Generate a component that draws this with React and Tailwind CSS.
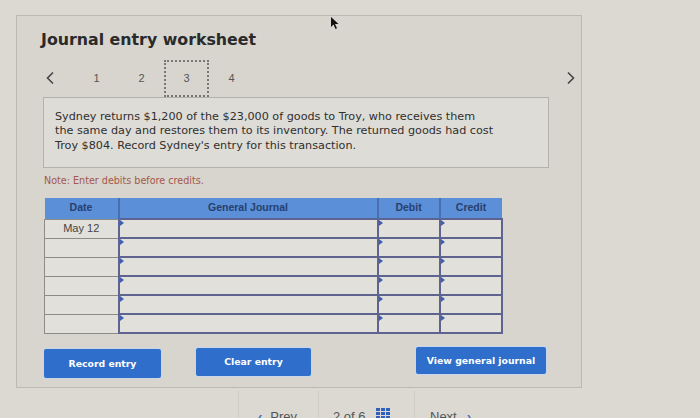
import React from "react";

const rows = ["May 12", "", "", "", "", ""];

const Marker = () => (
  <span className="absolute left-0 top-0 h-0 w-0 border-y-[3px] border-l-[4px] border-y-transparent border-l-[#3f5fb5]" />
);

const Tab = ({ label, active }) => (
  <div
    className={
      "flex h-[37px] w-[45px] items-center justify-center text-[11px] text-[#555]" +
      (active ? " border-2 border-dotted border-[#777]" : "")
    }
  >
    {label}
  </div>
);

const Button = ({ label, className }) => (
  <button
    className={
      "flex items-center justify-center rounded-[2px] bg-[#2f6ecb] text-[9.3px] font-bold text-white shadow-[0_0_0_1px_#c7d6ec] " +
      className
    }
    style={{ fontFamily: "'DejaVu Sans', Verdana, sans-serif" }}
  >
    {label}
  </button>
);

const App = () => {
  return (
    <div
      className="relative h-[418px] w-[700px] overflow-hidden bg-[#dbd9d2]"
      style={{ fontFamily: "'Liberation Sans', Arial, sans-serif" }}
    >
      {/* mouse pointer */}
      <svg className="absolute left-[330px] top-[16px]" width="10" height="14" viewBox="0 0 10 14">
        <path d="M1 1 L1 11 L3.5 8.5 L5.5 13 L7 12.3 L5 8 L8.5 8 Z" fill="#111" />
      </svg>

      <div className="ml-[16px] mt-[15px] h-[373px] w-[566px] border border-[#bcbab3] bg-[#d7d5ce] pl-[24px]">
        <h1
          className="mt-[12px] text-[15.8px] font-bold text-[#2a2a2a]"
          style={{ fontFamily: "'DejaVu Sans', Verdana, sans-serif" }}
        >
          Journal entry worksheet
        </h1>

        <div className="mt-[8px] flex h-[37px] items-center">
          <svg width="10" height="14" viewBox="0 0 10 14" className="ml-[4px]">
            <path d="M8 1.5 L2.5 7 L8 12.5" fill="none" stroke="#444" strokeWidth="1.6" />
          </svg>
          <div className="ml-[19px] flex">
            <Tab label="1" />
            <Tab label="2" />
            <Tab label="3" active />
            <Tab label="4" />
          </div>
          <svg width="10" height="14" viewBox="0 0 10 14" className="ml-[312px]">
            <path d="M2 1.5 L7.5 7 L2 12.5" fill="none" stroke="#444" strokeWidth="1.6" />
          </svg>
        </div>

        <div
          className="ml-[2px] h-[71px] w-[506px] border border-[#b3b1ab] bg-[#dedcd6] px-[11px] pt-[12px] text-[11.2px] leading-[14.5px] text-[#2f2f2f]"
          style={{ fontFamily: "'DejaVu Sans', Verdana, sans-serif" }}
        >
          Sydney returns $1,200 of the $23,000 of goods to Troy, who receives them
          <br />
          the same day and restores them to its inventory. The returned goods had cost
          <br />
          Troy $804. Record Sydney's entry for this transaction.
        </div>

        <p
          className="ml-[3px] mt-[6px] text-[9.6px] text-[#a4574a]"
          style={{ fontFamily: "'DejaVu Sans', Verdana, sans-serif" }}
        >
          Note: Enter debits before credits.
        </p>

        <table className="ml-[3px] mt-[10px] w-[457px] table-fixed border-collapse">
          <colgroup>
            <col className="w-[74px]" />
            <col className="w-[259px]" />
            <col className="w-[62px]" />
            <col className="w-[62px]" />
          </colgroup>
          <thead>
            <tr className="h-[21px] bg-[#5b8fd8] text-[10.5px] font-bold text-[#27406e]">
              <th className="border-r-2 border-[#4a6fb0] font-bold">Date</th>
              <th className="border-r-2 border-[#4a6fb0] font-bold">General Journal</th>
              <th className="border-r-2 border-[#4a6fb0] font-bold">Debit</th>
              <th className="font-bold">Credit</th>
            </tr>
          </thead>
          <tbody>
            {rows.map((date, i) => (
              <tr key={i} className="h-[19px] bg-[#e2e0da]">
                <td className="border border-[#8d8b86] text-center text-[11px] text-[#444]">{date}</td>
                <td className="relative border-2 border-[#5f6390]">
                  <Marker />
                </td>
                <td className="relative border-2 border-[#5f6390]">
                  <Marker />
                </td>
                <td className="relative border-2 border-[#5f6390]">
                  <Marker />
                </td>
              </tr>
            ))}
          </tbody>
        </table>

        <div className="mt-[14px] flex items-start">
          <Button label="Record entry" className="ml-[3px] mt-[1px] h-[29px] w-[117px]" />
          <Button label="Clear entry" className="ml-[35px] h-[28px] w-[115px]" />
          <Button label="View general journal" className="ml-[105px] -mt-[1px] h-[27px] w-[130px]" />
        </div>
      </div>

      {/* bottom pager */}
      <div className="mt-[3px] flex h-[40px] text-[13px] text-[#555]">
        <div className="w-[238px]" />
        <div className="flex w-[80px] border-l border-[#cdcbc4] pl-[19px] pt-[16px]">
          <span className="font-bold text-[#3d6fc0]">‹</span>
          <span className="ml-[8px]">Prev</span>
        </div>
        <div className="flex w-[97px] border-x border-[#cdcbc4] pl-[14px] pt-[16px]">
          <span>2 of 6</span>
          <svg width="14" height="11" viewBox="0 0 14 11" className="ml-[10px] mt-[1px]">
            {[0, 1, 2].map((r) =>
              [0, 1, 2].map((c) => (
                <rect key={r + "-" + c} x={c * 5} y={r * 4} width="4" height="3" fill="#2f5fbf" />
              ))
            )}
          </svg>
        </div>
        <div className="flex pl-[15px] pt-[16px]">
          <span>Next</span>
          <span className="ml-[10px] font-bold text-[#3d6fc0]">›</span>
        </div>
      </div>
    </div>
  );
};

export default App;
